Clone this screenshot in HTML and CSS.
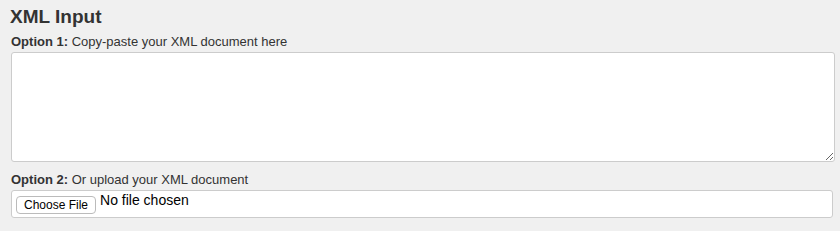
FILE: index.html
```html
<!DOCTYPE html>
<html lang="en">
<head>
    <meta charset="UTF-8">
    <title>XML Input</title>
    <link rel="stylesheet" href="styles.css">
</head>
<body>
    <div class="panel">
        <h2>XML Input</h2>
        <label for="xml-text"><b>Option 1:</b> Copy-paste your XML document here</label>
        <textarea id="xml-text"></textarea>
        <label for="xml-file"><b>Option 2:</b> Or upload your XML document</label>
        <div class="file-box">
            <input type="file" id="xml-file">
        </div>
    </div>
</body>
</html>
```

FILE: styles.css
```css
body {
    margin: 0;
    background-color: #f0f0f0;
    font-family: "Liberation Sans", Arial, sans-serif;
    color: #333;
}
.panel {
    padding: 5px 5px 0 11px;
}
h2 {
    margin: 0 0 6px -1px;
    font-size: 19px;
    line-height: 23px;
    font-weight: bold;
}
label {
    display: block;
    font-size: 13px;
    line-height: 15px;
    margin-bottom: 3px;
}
textarea {
    display: block;
    box-sizing: border-box;
    width: 824px;
    height: 110px;
    margin: 0 0 10px 0;
    border: 1px solid #ccc;
    border-radius: 3px;
    background-color: #fff;
}
.file-box {
    box-sizing: border-box;
    width: 822px;
    height: 28px;
    border: 1px solid #ccc;
    border-radius: 3px;
    background-color: #fff;
    padding: 1px 4px;
}
.file-box input {
    font-family: "Liberation Sans", Arial, sans-serif;
    font-size: 14px;
    color: #000;
    vertical-align: top;
}
.file-box input::file-selector-button {
    font-family: "Liberation Sans", Arial, sans-serif;
    font-size: 12px;
    padding: 1px 7px;
    margin: 4px 4px 0 0;
    background-color: #fff;
    border: 1px solid #bbb;
    border-radius: 4px;
    vertical-align: top;
}
```
